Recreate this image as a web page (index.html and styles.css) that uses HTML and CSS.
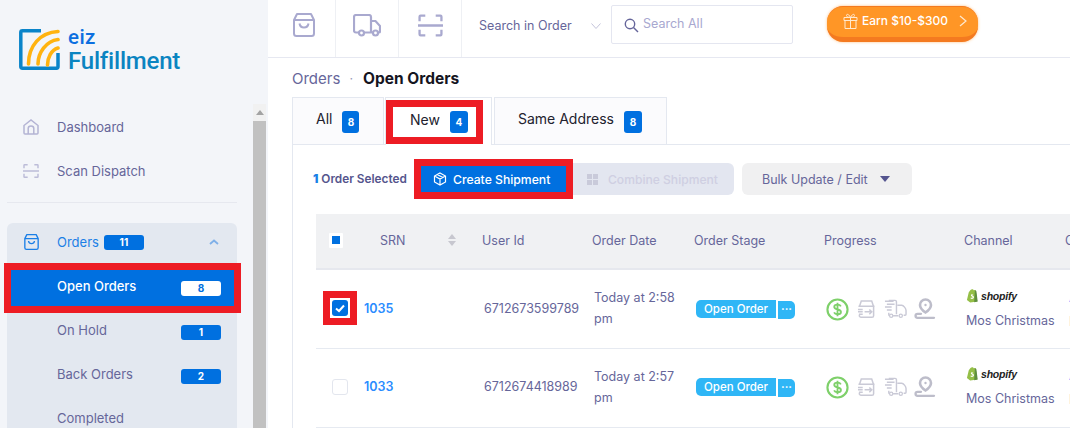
FILE: index.html
```html
<!DOCTYPE html>
<html lang="en">
<head>
<meta charset="utf-8">
<title>Open Orders</title>
<link rel="stylesheet" href="styles.css">
</head>
<body>
<svg class="defs" width="0" height="0" aria-hidden="true">
  <symbol id="i-dollar" viewBox="0 0 24 24"><circle cx="12" cy="12" r="10.500" fill="none" stroke="#7ed06a" stroke-width="2.200"/><path d="M15.500 8.800c-.6-1.200-2-1.800-3.500-1.800-1.900 0-3.400 1-3.400 2.500 0 3.300 7 1.700 7 5 0 1.600-1.500 2.500-3.600 2.500-1.700 0-3-.7-3.600-2M12 5v14" fill="none" stroke="#7ed06a" stroke-width="1.900"/></symbol>
  <symbol id="i-box" viewBox="0 0 20 19"><path d="M2.500 7 4.500 1h11l2 6v9.500c0 1-.8 1.700-1.700 1.700H4.200c-.9 0-1.700-.7-1.700-1.700V15.500M1.500 6.500h17M1 10h5M1 12.500h5M2 15h4M8 12.500h7.500M13 10l2.500 2.500L13 15" fill="none" stroke="#cacad6" stroke-width="1.600"/></symbol>
  <symbol id="i-ship" viewBox="0 0 24 20"><path d="M1 2h9M3 5h8M1 8h7M3 11h5M5 1h6.500c1 0 1.500.6 1.500 1.500V15.500M14 6h4.500c1.800 0 4.500 3.600 4.500 5.500v4c0 .6-.4 1-1 1h-1.500M15 17H9.500M5 14v2c0 .6.400 1 1 1" fill="none" stroke="#c9c9d6" stroke-width="1.500"/><circle cx="7.500" cy="17" r="1.700" fill="none" stroke="#c9c9d6" stroke-width="1.300"/><circle cx="17.500" cy="17" r="1.700" fill="none" stroke="#c9c9d6" stroke-width="1.300"/></symbol>
  <symbol id="i-pin" viewBox="0 0 22 22"><path d="M11.500 1.500a5.500 5.500 0 0 0-5.500 5.500c0 3.800 5.500 7.500 5.500 7.500S17 10.800 17 7a5.500 5.500 0 0 0-5.500-5.500Z" fill="none" stroke="#bdbdca" stroke-width="2.600"/><circle cx="11.500" cy="7" r="1.200" fill="#bdbdca"/><path d="M7 15.800H3.500c-2.600 0-2.600 4 0 4H20" fill="none" stroke="#bdbdca" stroke-width="2.300" stroke-linecap="round"/></symbol>
  <symbol id="i-bag" viewBox="0 0 22 24"><path d="M1 7 4 1h14l3 6v13.500c0 1.400-1 2.500-2.500 2.500h-15C2 23 1 21.900 1 20.500ZM1 7h20M6.500 10.500c.4 2.500 2.200 4 4.500 4s4.100-1.500 4.500-4" fill="none" stroke="currentColor" stroke-width="2" stroke-linejoin="round"/></symbol>
  <symbol id="i-scan" viewBox="0 0 24 22"><path d="M1.500 7V2.500c0-.6.400-1 1-1H7M17 1.500h4.500c.6 0 1 .4 1 1V7M1.500 15v4.500c0 .6.400 1 1 1H7M17 20.500h4.500c.6 0 1-.4 1-1V15M0 11h24" fill="none" stroke="currentColor" stroke-width="2.200"/></symbol>
  <symbol id="i-shopify" viewBox="0 0 13 15"><path d="M1 12.500 3 4C4 3.400 4.600 1 6.500.8c1-.1 1.500.4 1.800 1l1.400-.2 1 .9 1.500 11.500L4.500 15Z" fill="#95bf47"/><path d="M9.700 1.600 8.900 14.900l3.800-.9-1.500-11.500Z" fill="#5e8e3e"/><path d="M7.600 6.400c-.5-.3-2.200-.5-2.300.9 0 1.400 2 1.300 1.900 2.200-.1.800-1.300.600-2 .1l-.3 1.200c1.200.7 3.600.6 3.700-1.400.1-1.600-1.900-1.700-1.900-2.400 0-.5 1-.5 1.500-.3Z" fill="#fff"/></symbol>
</svg>

<div class="app">
  <aside class="sidebar">
    <div class="side-panel">
      <div class="logo">
        <svg class="logo-mark" viewBox="0 0 41 41" aria-hidden="true">
          <path d="M39 24v13.500c0 1-.5 1.700-1.500 1.700H3.500c-1 0-1.700-.7-1.700-1.700V3.500c0-1 .7-1.700 1.700-1.700H22" fill="none" stroke="#0a84c9" stroke-width="3.500"/>
          <path d="M9.500 35C9.500 17 21 3.500 39 2.500M19 35C19 24 27 12 39 10.500M28.500 36C28.500 29 32 21 39 19" fill="none" stroke="#ffb310" stroke-width="3.600" stroke-linecap="round"/>
        </svg>
        <div class="logo-text">
          <span class="logo-eiz">eiz</span>
          <span class="logo-name">Fulfillment</span>
        </div>
      </div>
      <nav class="nav">
        <a class="nav-item">
          <svg class="nav-icon" viewBox="0 0 16 16" aria-hidden="true"><path d="M1 6.500 8 1l7 5.500V14c0 .6-.4 1-1 1H2c-.6 0-1-.4-1-1ZM5.200 15V9.500C5.200 8 6.400 7 8 7s2.800 1 2.800 2.500V15" fill="none" stroke="#b4b4d4" stroke-width="1.500"/></svg>
          <span>Dashboard</span>
        </a>
        <a class="nav-item">
          <svg class="nav-icon nav-scan" aria-hidden="true"><use href="#i-scan"/></svg>
          <span>Scan Dispatch</span>
        </a>
      </nav>
      <div class="side-divider"></div>
      <div class="nav-group">
        <a class="group-head">
          <svg class="group-icon" aria-hidden="true"><use href="#i-bag"/></svg>
          <span class="group-title">Orders</span>
          <span class="count">11</span>
          <svg class="group-chev" viewBox="0 0 10 6" aria-hidden="true"><path d="M1 5l4-3.500L9 5" fill="none" stroke="#7fb0e8" stroke-width="1.800"/></svg>
        </a>
        <a class="sub-item is-active"><span class="sub-label">Open Orders</span><span class="count">8</span></a>
        <a class="sub-item"><span class="sub-label">On Hold</span><span class="count">1</span></a>
        <a class="sub-item"><span class="sub-label">Back Orders</span><span class="count">2</span></a>
        <a class="sub-item"><span class="sub-label">Completed</span></a>
      </div>
    </div>
    <div class="scrollbar"><div class="scroll-btn"><i class="scroll-arrow"></i></div><div class="scroll-thumb"></div></div>
  </aside>

  <main class="main">
    <header class="topbar">
      <div class="top-tool"><svg class="top-icon bag" aria-hidden="true"><use href="#i-bag"/></svg></div>
      <div class="top-tool">
        <svg class="top-icon truck" viewBox="0 0 28 23" aria-hidden="true"><path d="M6 18.500H3c-1.100 0-2-.9-2-2V3c0-1.100.9-2 2-2h13c1.100 0 2 .9 2 2v15.500H11M18 7h4.500l4.500 5v5.500c0 .6-.4 1-1 1h-1M20 18.500h-2" fill="none" stroke="currentColor" stroke-width="2.200"/><circle cx="8.500" cy="19" r="2.500" fill="none" stroke="currentColor" stroke-width="2.200"/><circle cx="22.500" cy="19" r="2.500" fill="none" stroke="currentColor" stroke-width="2.200"/></svg>
      </div>
      <div class="top-tool"><svg class="top-icon scan" aria-hidden="true"><use href="#i-scan"/></svg></div>
      <div class="search-scope">
        <span>Search in Order</span>
        <svg class="scope-chev" viewBox="0 0 10 6" aria-hidden="true"><path d="M.5.500 5 5.500 9.500.500" fill="none" stroke="#c4c4da" stroke-width="1"/></svg>
      </div>
      <div class="search-box">
        <svg class="search-icon" viewBox="0 0 15 15" aria-hidden="true"><circle cx="6" cy="6" r="4.700" fill="none" stroke="#65659a" stroke-width="1.400"/><path d="M9.500 9.500 14 14" stroke="#65659a" stroke-width="1.400"/></svg>
        <span>Search All</span>
      </div>
      <a class="earn">
        <svg class="earn-gift" viewBox="0 0 15 16" aria-hidden="true"><path d="M1 4.500h13v3H1ZM2 7.500v8h11v-8M7.500 4.500v11M7.500 4.500C6 1 3.500.5 3.500 2.500c0 1.500 2 2 4 2 2 0 4-.5 4-2 0-2-2.500-1.500-4 2Z" fill="none" stroke="#ffe9cf" stroke-width="1"/></svg>
        <span>Earn $10-$300</span>
        <svg class="earn-chev" viewBox="0 0 8 12" aria-hidden="true"><path d="M1 1l6 5-6 5" fill="none" stroke="#ffe9cf" stroke-width="1.200"/></svg>
      </a>
    </header>

    <div class="content">
      <div class="crumbs"><span class="crumb">Orders</span><span class="crumb-dot">·</span><strong>Open Orders</strong></div>
      <div class="tabs">
        <a class="tab tab-all"><span>All</span><b class="tab-count">8</b></a>
        <a class="tab tab-new"><span>New</span><b class="tab-count">4</b><i class="mark-new"></i></a>
        <a class="tab tab-same"><span>Same Address</span><b class="tab-count">8</b></a>
      </div>
      <section class="panel">
        <div class="toolbar">
          <span class="selected"><b>1</b> Order Selected</span>
          <button class="btn btn-create">
            <svg class="btn-cube" viewBox="0 0 14 14" aria-hidden="true"><path d="M7 1l5.500 3v6L7 13l-5.500-3V4ZM1.500 4 7 7l5.500-3M7 7v6M4.200 2.500 9.800 5.500" fill="none" stroke="#fff" stroke-width="1.200"/></svg>
            Create Shipment
          </button>
          <button class="btn btn-combine">
            <svg class="btn-grid" viewBox="0 0 11 11" aria-hidden="true"><path d="M0 0h5v5H0ZM6 0h5v5H6ZM0 6h5v5H0ZM6 6h5v5H6Z" fill="#c9cada"/></svg>
            Combine Shipment
          </button>
          <button class="btn btn-bulk">Bulk Update / Edit<i class="caret"></i></button>
        </div>

        <div class="table">
          <div class="row row-head">
            <div class="cell"><span class="check check-some"></span></div>
            <div class="cell head-srn">SRN<span class="sort"><i></i><i></i></span></div>
            <div class="cell">User Id</div>
            <div class="cell">Order Date</div>
            <div class="cell">Order Stage</div>
            <div class="cell">Progress</div>
            <div class="cell">Channel</div>
            <div class="cell">Customer</div>
          </div>

          <div class="row">
            <div class="cell"><span class="check check-on"><svg viewBox="0 0 12 12" aria-hidden="true"><path d="M2 6.500 5 9l5-5.500" fill="none" stroke="#fff" stroke-width="2"/></svg><i class="mark-check"></i></span></div>
            <div class="cell srn">1035</div>
            <div class="cell body uid">6712673599789</div>
            <div class="cell body date">Today at 2:58 pm</div>
            <div class="cell body"><span class="stage">Open Order</span><span class="stage-more">···</span></div>
            <div class="cell body progress">
              <svg class="p-dollar" aria-hidden="true"><use href="#i-dollar"/></svg>
              <svg class="p-box" aria-hidden="true"><use href="#i-box"/></svg>
              <svg class="p-ship" aria-hidden="true"><use href="#i-ship"/></svg>
              <svg class="p-pin" aria-hidden="true"><use href="#i-pin"/></svg>
            </div>
            <div class="cell body channel">
              <span class="shop"><svg class="shop-bag" aria-hidden="true"><use href="#i-shopify"/></svg><em>shopify</em></span>
              <span class="store">Mos Christmas</span>
            </div>
            <div class="cell body customer"><span class="cust-a">Ann</span><span class="cust-b">Mos</span></div>
          </div>

          <div class="row">
            <div class="cell"><span class="check"></span></div>
            <div class="cell srn">1033</div>
            <div class="cell body uid">6712674418989</div>
            <div class="cell body date">Today at 2:57 pm</div>
            <div class="cell body"><span class="stage">Open Order</span><span class="stage-more">···</span></div>
            <div class="cell body progress">
              <svg class="p-dollar" aria-hidden="true"><use href="#i-dollar"/></svg>
              <svg class="p-box" aria-hidden="true"><use href="#i-box"/></svg>
              <svg class="p-ship" aria-hidden="true"><use href="#i-ship"/></svg>
              <svg class="p-pin" aria-hidden="true"><use href="#i-pin"/></svg>
            </div>
            <div class="cell body channel">
              <span class="shop"><svg class="shop-bag" aria-hidden="true"><use href="#i-shopify"/></svg><em>shopify</em></span>
              <span class="store">Mos Christmas</span>
            </div>
            <div class="cell body customer"><span class="cust-a">Ann</span><span class="cust-b">Mos</span></div>
          </div>
        </div>
      </section>
    </div>
  </main>
</div>
</body>
</html>
```
FILE: styles.css
```css
* { box-sizing: border-box; }
html, body { margin: 0; height: 100%; overflow: hidden; }
body { font-family: Inter, "Liberation Sans", sans-serif; font-size: 12.5px; color: #66669a; background: #fff; }
.defs { position: absolute; }
i { font-style: normal; }
.app { display: flex; width: 1070px; height: 428px; overflow: hidden; }

/* sidebar */
.sidebar { flex: 0 0 268px; display: flex; background: #f3f5f9; overflow: hidden; font-size: 13px; }
.side-panel { flex: 0 0 253px; padding: 29px 16px 0 7px; }
.logo { display: flex; height: 76px; margin-left: 12px; }
.logo-mark { width: 41px; height: 41px; flex: none; }
.logo-text { display: flex; flex-direction: column; margin-left: 8px; }
.logo-eiz { font-family: Roboto, sans-serif; font-size: 20.500px; line-height: 17px; font-weight: 500; color: #0c6fe0; margin-bottom: 3px; letter-spacing: .4px; }
.logo-name { font-family: Roboto, sans-serif; font-size: 24px; line-height: 24px; font-weight: 500; color: #0a84c1; white-space: nowrap; letter-spacing: -.2px; }
.nav-item { display: flex; align-items: center; height: 44px; color: #66669a; }
.nav-icon { width: 16px; height: 16px; margin-left: 16px; flex: none; }
.nav-item span { margin-left: 18px; }
.nav-scan { color: #bcbcd8; }
.side-divider { height: 1px; background: #e6e8ef; margin-top: 9px; margin-bottom: 20px; }
.nav-group { background: #e3e8f0; border-radius: 6px 6px 0 0; padding: 0 3px 0 4px; height: 230px; }
.group-head { display: flex; align-items: center; height: 38px; margin-bottom: 9px; color: #1b7fe6; }
.group-icon { width: 15px; height: 16px; margin-left: 13px; color: #1b7fe6; flex: none; }
.group-title { margin-left: 18px; }
.group-head .count { margin-left: 5px; }
.group-chev { width: 10px; height: 6px; margin-left: 65px; }
.count { display: inline-block; width: 40px; height: 15px; border-radius: 3px; background: #0070e0; color: #fff; font-size: 10px; font-weight: 700; line-height: 15px; text-align: center; }
.sub-item { display: flex; align-items: center; height: 36px; margin-bottom: 8px; padding: 0 13px 0 46px; color: #66669a; }
.sub-label { flex: 1; padding-bottom: 4px; }
.sub-item.is-active { background: #0070e0; color: #fff; outline: 7px solid #ed1c24; }
.is-active .sub-label { font-weight: 500; }
.is-active .count { background: #fff; color: #0070e0; }
.scrollbar { flex: 0 0 13px; margin-top: 104px; background: #f1f1f1; }
.scroll-btn { height: 17px; display: flex; justify-content: center; padding-top: 6px; }
.scroll-arrow { width: 0; height: 0; border: 4px solid transparent; border-top: 0; border-bottom: 5px solid #a3a3a3; }
.scroll-thumb { height: 320px; background: #c1c1c1; }

/* top bar */
.main { flex: 1; min-width: 0; overflow: hidden; }
.topbar { display: flex; align-items: center; height: 58px; border-bottom: 1px solid #e6e8f1; }
.top-tool { flex: none; height: 57px; display: flex; justify-content: center; align-items: center; border-right: 1px solid #eef0f4; width: 63px; padding-bottom: 7px; color: #a9a9cf; }
.top-tool:first-child { width: 68px; padding-left: 4px; }
.top-icon { flex: none; }
.top-icon.bag { width: 22px; height: 24px; }
.top-icon.truck { width: 28px; height: 23px; }
.top-icon.scan { width: 25px; height: 23px; }
.search-scope { display: flex; align-items: center; width: 149px; height: 44px; padding-left: 17px; margin-top: -6px; color: #66669a; white-space: nowrap; }
.scope-chev { width: 10px; height: 6px; margin-left: 19px; }
.search-box { display: flex; align-items: center; width: 182px; height: 39px; margin-top: -8px; padding-left: 12px; border: 1px solid #e4e6f0; border-radius: 2px; color: #a8a8d0; }
.search-icon { width: 15px; height: 15px; margin-right: 4px; margin-top: 1px; }
.search-box span { margin-top: -3px; }
.earn { display: flex; align-items: center; width: 151px; height: 36px; margin-left: 34px; margin-top: -9px; padding: 0 0 3px 16px; border-radius: 16px; background: #ff9626; border-top: 1px solid #f47a20; border-bottom: 5px solid #f47a20; box-shadow: 0 0 3px rgba(255,150,40,.6); color: #fff; font-weight: 500; font-size: 12px; }
.earn-gift { width: 15px; height: 16px; margin-right: 4px; }
.earn-chev { width: 8px; height: 12px; margin-left: 11px; }

/* content */
.content { padding: 0 0 0 24px; }
.crumbs { display: flex; align-items: center; height: 39px; padding-top: 1px; white-space: nowrap; }
.crumb { font-size: 15px; color: #66669a; }
.crumb-dot { margin: 0 10px 0 9px; color: #9a9ab8; }
.crumbs strong { font-size: 15.500px; font-weight: 700; color: #15151f; }
.tabs { display: flex; height: 47px; }
.tab { position: relative; display: flex; align-items: center; height: 47px; border: 1px solid #e4e8f0; border-bottom: 0; color: #22222e; font-size: 14px; background: #fff; }
.tab span { margin-top: -5px; }
.tab-all { width: 92px; padding-left: 23px; background: #fbfbfd; }
.tab-new { width: 107px; margin-left: 1px; padding-left: 24px; z-index: 2; height: 48px; }
.tab-same { width: 173px; margin-left: 2px; padding-left: 23px; background: #fbfbfd; }
.tab-count { display: block; width: 18px; height: 22px; margin-left: 10px; border-radius: 3px; background: #0070e0; color: #fff; font-size: 10px; font-weight: 700; line-height: 22px; text-align: center; margin-top: 1px; }
.tab-all .tab-count { width: 17px; }
.mark-new { position: absolute; left: 0; top: 2px; width: 97px; height: 44px; border: 7px solid #ed1c24; }
.panel { border-top: 1px solid #e4e8f0; border-left: 1px solid #e4e8f0; height: 284px; }
.toolbar { display: flex; align-items: center; height: 69px; padding-left: 20px; padding-bottom: 1px; }
.selected { width: 108px; font-size: 11.800px; font-weight: 600; white-space: nowrap; color: #55558d; }
.selected b { color: #1b7fe6; }
.btn { display: flex; align-items: center; border: 0; padding: 0; font-family: inherit; font-size: 12.500px; white-space: nowrap; }
.btn-create { position: relative; z-index: 1; width: 145px; height: 26px; padding-left: 12px; background: #0070e0; color: #fff; font-weight: 500; font-size: 12.200px; outline: 7px solid #ed1c24; }
.btn-cube { width: 14px; height: 14px; margin-right: 6px; }
.btn-combine { width: 161px; height: 32px; margin-left: 7px; padding-left: 14px; border-radius: 0 6px 6px 0; background: #e3e6f0; color: #cfcfe2; font-weight: 500; font-size: 12.100px; }
.btn-grid { width: 11px; height: 11px; margin-right: 10px; }
.btn-bulk { width: 170px; height: 32px; margin-left: 8px; padding-left: 20px; border-radius: 6px; background: #f0f0f1; color: #66669a; }
.caret { margin-left: 12px; width: 0; height: 0; border: 5.500px solid transparent; border-bottom: 0; border-top: 6px solid #55558f; }

/* table */
.table { margin-left: 23px; width: 1000px; }
.row { display: grid; grid-template-columns: 48px 118px 110px 102px 130px 140px 101px 151px; align-items: center; height: 79px; border-bottom: 1px solid #e6eaf1; }
.row-head { height: 56px; padding-bottom: 2px; background: #f0f1f3; border-bottom: 2px solid #e6e8ee; }
.row:last-child { padding-bottom: 2px; }
.row:last-child .date, .row:last-child .channel, .row:last-child .customer { margin-top: 0; }
.cell { position: relative; min-width: 0; white-space: nowrap; }
.cell:first-child { padding-left: 16px; }
.head-srn { display: flex; align-items: center; padding-left: 16px; }
.sort { display: flex; flex-direction: column; gap: 2px; margin-left: 43px; }
.sort i { width: 0; height: 0; border: 4px solid transparent; border-top: 0; border-bottom: 5px solid #c7c7cf; }
.sort i + i { border-bottom: 0; border-top: 5px solid #c7c7cf; }
.check { position: relative; display: flex; align-items: center; justify-content: center; width: 16px; height: 16px; border: 1px solid #e3e6ee; border-radius: 3px; background: #fff; }
.check-some { width: 14px; height: 15px; margin-left: -3px; border: 0; border-radius: 1px; }
.check-some::after { content: ""; width: 8px; height: 8px; background: #0070e0; }
.check-on { background: #0070e0; border: 0; margin-top: -2px; }
.check-on svg { width: 12px; height: 12px; }
.mark-check { position: absolute; left: -9px; top: -9px; width: 34px; height: 34px; border: 7px solid #ed1c24; }
.srn { font-weight: 600; color: #2a8cff; font-size: 12.500px; margin-top: -2px; }
.body { padding-left: 2px; }
.uid { margin-top: -2px; }
.date { white-space: normal; width: 88px; line-height: 21.500px; margin-top: -2px; }
.stage { display: inline-block; width: 80px; height: 18px; border-radius: 5px 0 0 5px; background: #2fb6f6; color: #fff; font-size: 11.500px; font-weight: 500; line-height: 18px; text-align: center; }
.stage-more { display: inline-block; width: 17px; height: 18px; margin-left: 2px; border-radius: 0 5px 5px 0; background: #2fb6f6; color: #fff; font-size: 11px; font-weight: 700; line-height: 16px; text-align: center; }
.progress { display: flex; align-items: center; }
.p-dollar { width: 23px; height: 23px; flex: none; }
.p-box { width: 19px; height: 18px; margin-left: 8px; flex: none; }
.p-ship { width: 23px; height: 20px; margin-left: 8px; flex: none; }
.p-pin { width: 22px; height: 22px; margin-left: 7px; flex: none; }
.channel { display: flex; flex-direction: column; }
.shop { display: flex; align-items: center; height: 15px; margin-top: -2px; }
.shop-bag { width: 12px; height: 15px; flex: none; margin-top: -2px; }
.shop em { margin-left: 3px; font-family: "Liberation Sans", sans-serif; font-size: 10.500px; font-weight: 700; font-style: italic; color: #1d1d1d; letter-spacing: -.2px; }
.store { margin-top: 9px; }
.customer { display: flex; flex-direction: column; gap: 9px; padding-left: 4px; }
.cust-a { color: #2a8cff; }
.cust-b { color: #888; }
```
